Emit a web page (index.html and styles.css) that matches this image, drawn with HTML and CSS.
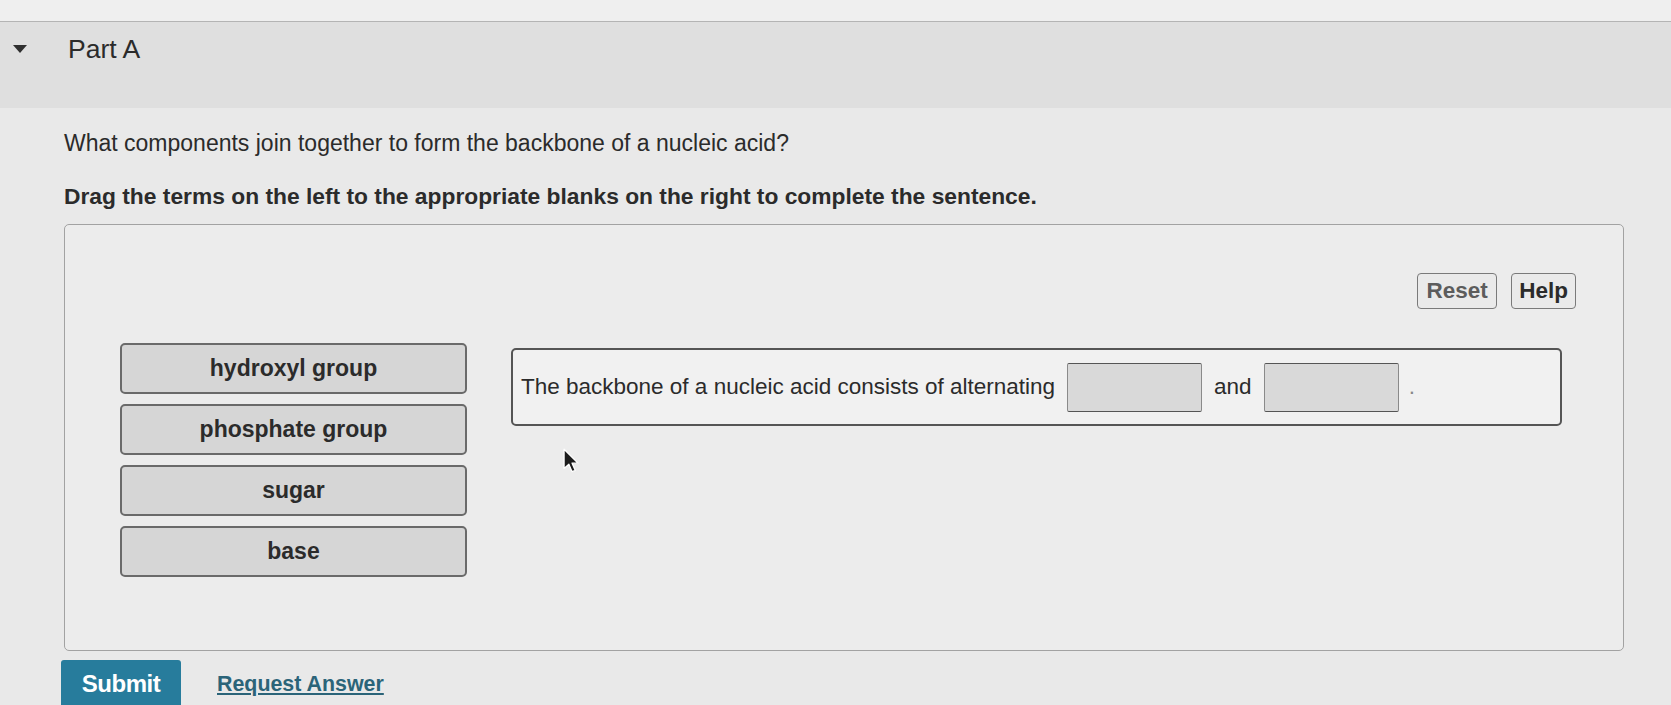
FILE: index.html
```html
<!DOCTYPE html>
<html lang="en">

<head>
  <meta charset="UTF-8">
  <meta name="viewport" content="width=device-width, initial-scale=1.0">
  <title>Part A</title>
  <link rel="stylesheet" href="styles.css">
</head>

<body>
  <div class="topstrip"></div>

  <div class="part-header">
    <svg class="toggle" width="14" height="8" viewBox="0 0 14 8">
      <path d="M0 0 L14 0 L7 8 Z" fill="#2f2f2f" />
    </svg>
    <h2 class="part-title">Part A</h2>
  </div>

  <div class="content">
    <p class="question">What components join together to form the backbone of a nucleic acid?</p>
    <p class="instructions">Drag the terms on the left to the appropriate blanks on the right to complete the sentence.</p>

    <div class="dragbox">
      <div class="tools">
        <button class="toolbtn reset" type="button">Reset</button>
        <button class="toolbtn" type="button">Help</button>
      </div>

      <div class="workarea">
        <div class="terms">
          <div class="term">hydroxyl group</div>
          <div class="term">phosphate group</div>
          <div class="term">sugar</div>
          <div class="term">base</div>
        </div>

        <div class="sentence">
          <span>The backbone of a nucleic acid consists of alternating</span>
          <span class="blank"></span>
          <span>and</span>
          <span class="blank"></span>
          <span class="dot">.</span>
        </div>
      </div>
    </div>
  </div>

  <div class="actions">
    <button class="submit" type="button">Submit</button>
    <a class="request" href="#">Request Answer</a>
  </div>

  <!-- mouse pointer sitting over the work area -->
  <svg class="pointer" width="16" height="26" viewBox="0 0 15 24">
    <path d="M1 1 L1 19 L5.5 15 L8.5 22 L11.5 20.8 L8.5 14 L14 14 Z" fill="#1c1c1c" stroke="#fff" stroke-width="1.2" stroke-linejoin="round" />
  </svg>
</body>

</html>
```

FILE: styles.css
```css
html,
body {
  margin: 0;
  width: 1671px;
  height: 705px;
  overflow: hidden;
}

body {
  position: relative;
  background-color: #e9e9e9;
  font-family: "Liberation Sans", Arial, Helvetica, sans-serif;
  color: #2b2b2b;
}

.topstrip {
  height: 21px;
  background-color: #efefef;
  border-bottom: 1px solid #b4b4b4;
}

.part-header {
  height: 86px;
  display: flex;
  align-items: center;
  padding-left: 13px;
  padding-bottom: 32px;
  box-sizing: border-box;
  background-color: #dfdfdf;
}

.toggle {
  margin-right: 41px;
}

.part-title {
  margin: 0;
  font-size: 26.5px;
  font-weight: normal;
  line-height: 30px;
  color: #2b2b2b;
}

.content {
  padding: 21px 0 0 64px;
}

.question,
.instructions {
  margin: 0;
  font-size: 23px;
  line-height: 28px;
}

.instructions {
  margin-top: 25px;
  font-weight: bold;
  font-size: 22.8px;
}

.dragbox {
  margin-top: 14px;
  width: 1560px;
  height: 427px;
  box-sizing: border-box;
  border: 1px solid #a2a2a2;
  border-radius: 5px;
  background-color: #ececec;
  padding: 48px 47px 0 55px;
}

.tools {
  display: flex;
  justify-content: flex-end;
  gap: 14px;
}

.toolbtn {
  height: 36px;
  padding: 0 7px;
  border: 1.5px solid #7a7a7a;
  border-radius: 4px;
  background-color: #eaeaea;
  font-family: inherit;
  font-size: 22.5px;
  font-weight: bold;
  color: #2b2b2b;
}

.reset {
  width: 80px;
  color: #5c5c5c;
}

.workarea {
  display: flex;
  align-items: flex-start;
  gap: 44px;
  margin-top: 34px;
}

.terms {
  display: flex;
  flex-direction: column;
  gap: 10px;
}

.term {
  width: 347px;
  height: 51px;
  box-sizing: border-box;
  border: 2px solid #6a6a6a;
  border-radius: 5px;
  background-color: #d6d6d6;
  display: flex;
  align-items: center;
  justify-content: center;
  font-size: 23px;
  font-weight: bold;
  color: #2b2b2b;
}

.sentence {
  margin-top: 5px;
  width: 1051px;
  height: 78px;
  box-sizing: border-box;
  border: 2px solid #555;
  border-radius: 5px;
  background-color: #f1f1f1;
  padding: 0 0 0 8px;
  display: flex;
  align-items: center;
  gap: 12px;
  font-size: 22.5px;
  color: #2b2b2b;
}

.blank {
  width: 135px;
  height: 49px;
  box-sizing: border-box;
  border: 1px solid #8a8a8a;
  border-top-color: #555;
  border-bottom-color: #555;
  border-radius: 2px;
  background-color: #d9d9d9;
}

.dot {
  margin-left: -2px;
  color: #888;
}

.actions {
  display: flex;
  align-items: center;
  gap: 36px;
  padding: 9px 0 0 61px;
}

.submit {
  width: 120px;
  height: 48px;
  border: none;
  border-radius: 3px;
  background-color: #277c9c;
  font-family: inherit;
  font-size: 24px;
  font-weight: bold;
  color: #fff;
  letter-spacing: -0.5px;
}

.request {
  font-size: 21.4px;
  font-weight: bold;
  color: #2b6479;
  text-decoration: underline;
}

.pointer {
  position: absolute;
  left: 563px;
  top: 448px;
}
```
